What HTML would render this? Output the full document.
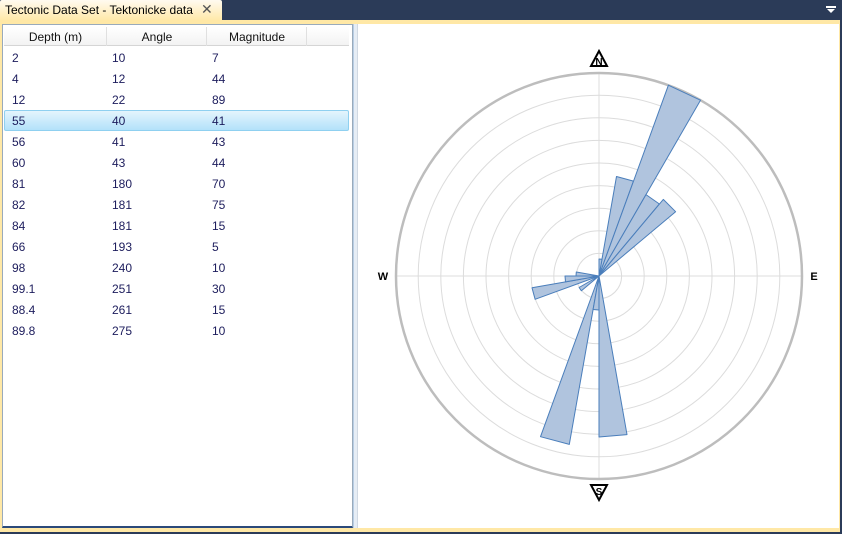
<!DOCTYPE html>
<html><head><meta charset="utf-8"><style>
*{margin:0;padding:0;box-sizing:border-box}
body{width:842px;height:534px;overflow:hidden;background:#2b3b58;font-family:"Liberation Sans",sans-serif;position:relative}
.tab{position:absolute;left:0;top:0;width:222px;height:21px;background:linear-gradient(#fffaf0,#ffe8a6);border-radius:2px 2px 0 0;font-size:12px;color:#000;padding:3px 0 0 5px}
.tab span{position:absolute;left:201px;top:1px;font-size:14px;color:#555}
.frame{position:absolute;left:0;top:20px;width:840px;height:512px;background:#ffe8a6}
.left{position:absolute;left:2px;top:24px;width:351px;height:504px;background:#fff;border:1px solid #9ab;border-bottom:2px solid #2b4a7a}
.sep{position:absolute;left:353px;top:24px;width:5px;height:504px;background:#e6edf5;border-left:1px solid #b8cde4;border-right:1px solid #d0d8e2}
.right{position:absolute;left:358px;top:24px;width:481px;height:504px;background:#fff}
.hdr{position:absolute;left:4px;top:27px;width:345px;height:19px;background:linear-gradient(#fff,#f3f3f3);border-bottom:1px solid #d5d5d5;font-size:12px;color:#111}
.hdr div{position:absolute;top:3px;text-align:center}
.hdr i{position:absolute;top:0;width:1px;height:19px;background:#e0e0e0}
.row{position:absolute;left:4px;width:345px;height:21px;font-size:12px;color:#1c1c5c}
.row div{position:absolute;top:4px}
.sel{background:linear-gradient(#e4f5fd,#b3e2fa);border:1px solid #8fd0f0;border-radius:2px}
</style></head><body>
<div class="tab">Tectonic Data Set - Tektonicke data<span>✕</span></div>
<div style="position:absolute;left:826px;top:6px;width:10px;height:2px;background:#fff"></div>
<div style="position:absolute;left:827px;top:9px;width:0;height:0;border-left:4px solid transparent;border-right:4px solid transparent;border-top:4px solid #fff"></div>
<div class="frame"></div>
<div class="left"></div>
<div class="sep"></div>
<div class="right"></div>
<div class="hdr">
<div style="left:0;width:103px">Depth (m)</div><i style="left:102px"></i>
<div style="left:103px;width:100px">Angle</div><i style="left:202px"></i>
<div style="left:203px;width:100px">Magnitude</div><i style="left:302px"></i>
</div>
<div class="row" style="top:47px"><div style="left:8px">2</div><div style="left:108px">10</div><div style="left:208px">7</div></div>
<div class="row" style="top:68px"><div style="left:8px">4</div><div style="left:108px">12</div><div style="left:208px">44</div></div>
<div class="row" style="top:89px"><div style="left:8px">12</div><div style="left:108px">22</div><div style="left:208px">89</div></div>
<div class="row sel" style="top:110px"><div style="left:7px;top:3px">55</div><div style="left:107px;top:3px">40</div><div style="left:207px;top:3px">41</div></div>
<div class="row" style="top:131px"><div style="left:8px">56</div><div style="left:108px">41</div><div style="left:208px">43</div></div>
<div class="row" style="top:152px"><div style="left:8px">60</div><div style="left:108px">43</div><div style="left:208px">44</div></div>
<div class="row" style="top:173px"><div style="left:8px">81</div><div style="left:108px">180</div><div style="left:208px">70</div></div>
<div class="row" style="top:194px"><div style="left:8px">82</div><div style="left:108px">181</div><div style="left:208px">75</div></div>
<div class="row" style="top:215px"><div style="left:8px">84</div><div style="left:108px">181</div><div style="left:208px">15</div></div>
<div class="row" style="top:236px"><div style="left:8px">66</div><div style="left:108px">193</div><div style="left:208px">5</div></div>
<div class="row" style="top:257px"><div style="left:8px">98</div><div style="left:108px">240</div><div style="left:208px">10</div></div>
<div class="row" style="top:278px"><div style="left:8px">99.1</div><div style="left:108px">251</div><div style="left:208px">30</div></div>
<div class="row" style="top:299px"><div style="left:8px">88.4</div><div style="left:108px">261</div><div style="left:208px">15</div></div>
<div class="row" style="top:320px"><div style="left:8px">89.8</div><div style="left:108px">275</div><div style="left:208px">10</div></div>

<svg style="position:absolute;left:0;top:0" width="842" height="534">
<g fill="none" stroke="#dcdcdc" stroke-width="1">
<line x1="396" y1="276" x2="802" y2="276"/><line x1="599" y1="73" x2="599" y2="479"/>
<circle cx="599" cy="276" r="22.6"/><circle cx="599" cy="276" r="45.2"/><circle cx="599" cy="276" r="67.8"/><circle cx="599" cy="276" r="90.4"/><circle cx="599" cy="276" r="113"/><circle cx="599" cy="276" r="135.6"/><circle cx="599" cy="276" r="158.2"/><circle cx="599" cy="276" r="180.8"/>
</g>
<circle cx="599" cy="276" r="203" fill="none" stroke="#bdbdbd" stroke-width="2.5"/>
<g fill="#b0c4de" stroke="#4a7ebb" stroke-width="1" stroke-linejoin="round">
<polygon points="599,276 616.5,176.5 633.5,181.1"/>
<polygon points="599,276 668.4,85.2 700.5,100.2"/>
<polygon points="599,276 646,194.6 659.4,204"/>
<polygon points="599,276 663.3,199.4 675.6,211.7"/>
<polygon points="599,276 599,259 602,259.3"/>
<polygon points="599,276 627,434.6 599,437"/>
<polygon points="599,276 569.3,444.4 540.5,436.7"/>
<polygon points="599,276 599,310 593.1,309.5"/>
<polygon points="599,276 535.1,299.3 532,287.8"/>
<polygon points="599,276 565.5,281.9 565,276"/>
<polygon points="599,276 576,276 576.3,272"/>
<polygon points="599,276 581.4,290.8 579.1,287.5"/>
</g>
<polygon points="599,51 607,66 591,66" fill="#fff" stroke="#000" stroke-width="2"/>
<text x="599" y="65" font-size="10" font-weight="bold" text-anchor="middle" font-family="Liberation Sans">N</text>
<polygon points="599,500 607,485 591,485" fill="#fff" stroke="#000" stroke-width="2"/>
<text x="599" y="495" font-size="10" font-weight="bold" text-anchor="middle" font-family="Liberation Sans">S</text>
<text x="383" y="280" font-size="11" font-weight="bold" text-anchor="middle" font-family="Liberation Sans">W</text>
<text x="814" y="280" font-size="11" font-weight="bold" text-anchor="middle" font-family="Liberation Sans">E</text>
</svg>
</body></html>
